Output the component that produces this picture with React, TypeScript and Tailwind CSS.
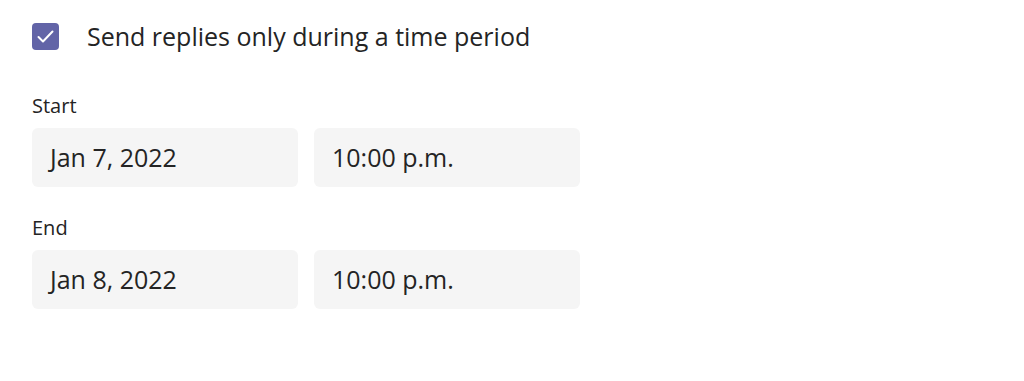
const FONT = "font-['Open_Sans','Noto_Sans',sans-serif]";

function Field({ value }: { value: string }) {
  return (
    <div className="flex h-[59px] w-[266px] items-center rounded-[6px] bg-[#f5f5f5] px-[18px] text-[25px] text-[#242424]">
      {value}
    </div>
  );
}

function Range({ label, date, time }: { label: string; date: string; time: string }) {
  return (
    <div className="flex flex-col">
      <div className="h-[24px] text-[20px] leading-[24px] text-[#242424]">{label}</div>
      <div className="mt-[10px] flex gap-[16px]">
        <Field value={date} />
        <Field value={time} />
      </div>
    </div>
  );
}

export default function App() {
  return (
    <div className={`h-[381px] w-[1024px] bg-white pl-[32px] pt-[22px] ${FONT}`}>
      <label className="flex items-center gap-[28px]">
        <span className="h-[27px] w-[27px] rounded-[4px] bg-[#6264a7]">
          <svg width="27" height="27" viewBox="0 0 27 27" fill="none">
            <path d="M6.5 14 L11 18.5 L20.5 8.5" stroke="white" strokeWidth="2" strokeLinecap="round" strokeLinejoin="round" />
          </svg>
        </span>
        <span className="text-[25px] leading-[28px] text-[#242424]">Send replies only during a time period</span>
      </label>
      <div className="mt-[44px] flex flex-col gap-[29px]">
        <Range label="Start" date="Jan 7, 2022" time="10:00 p.m." />
        <Range label="End" date="Jan 8, 2022" time="10:00 p.m." />
      </div>
    </div>
  );
}
